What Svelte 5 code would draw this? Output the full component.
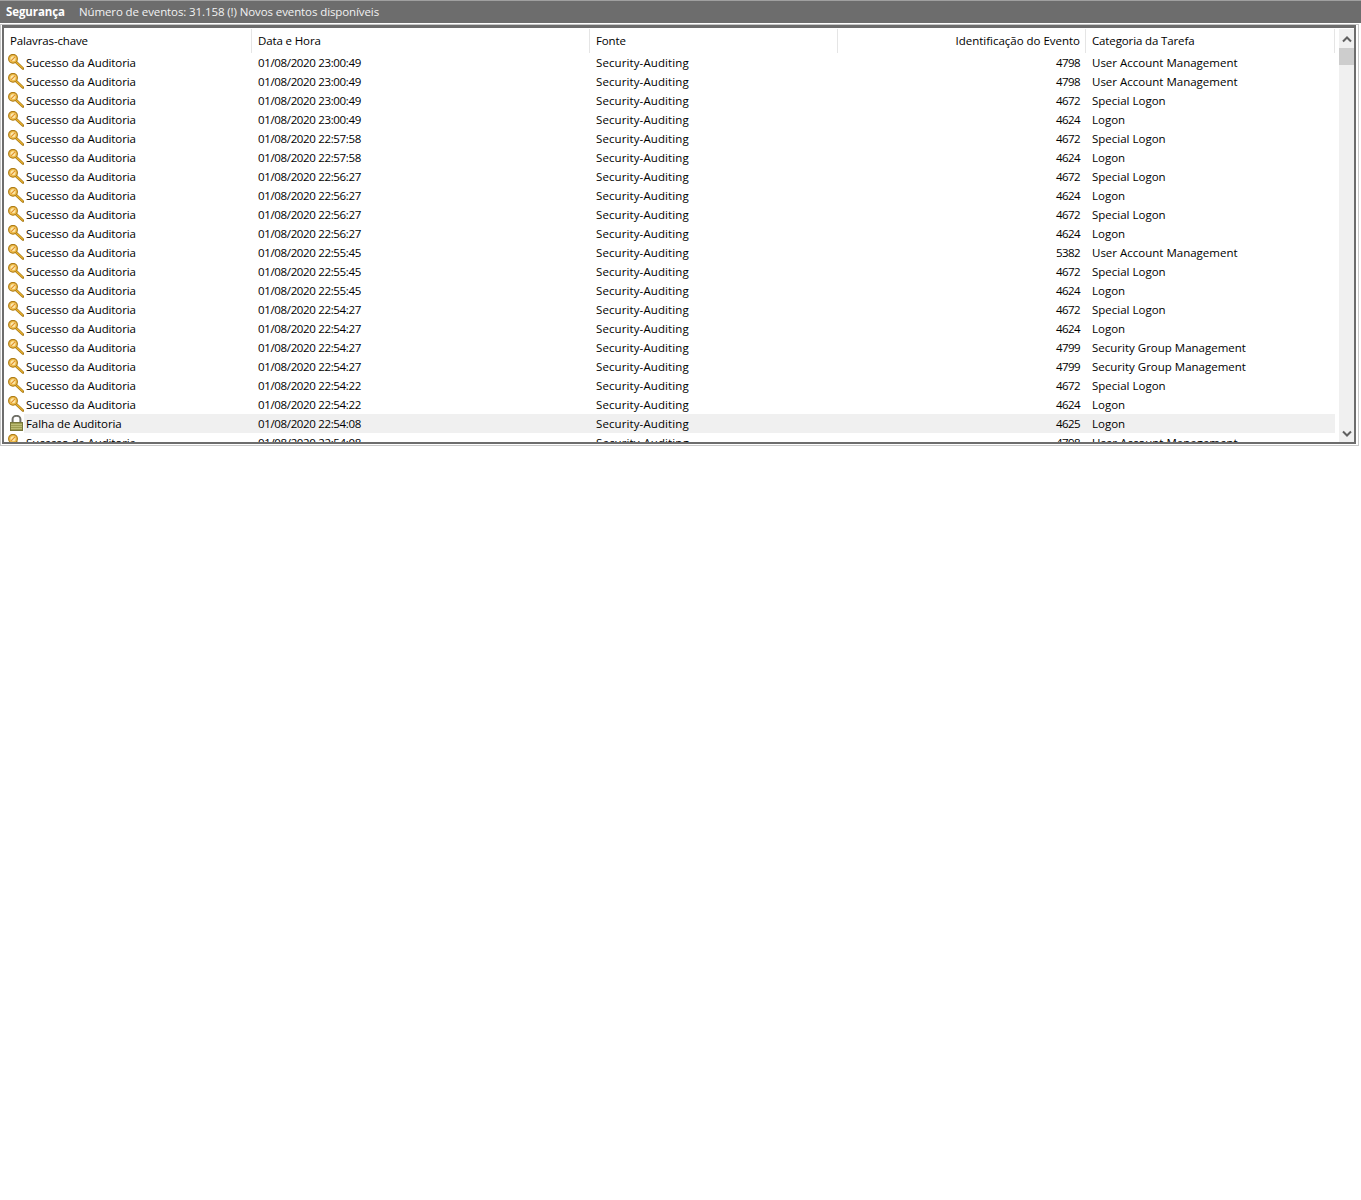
<script>
  const s = 'Sucesso da Auditoria', f = 'Falha de Auditoria';
  const uam = 'User Account Management', sl = 'Special Logon', l = 'Logon', sg = 'Security Group Management';
  const rows = [
    [s,'23:00:49',4798,uam],[s,'23:00:49',4798,uam],[s,'23:00:49',4672,sl],[s,'23:00:49',4624,l],
    [s,'22:57:58',4672,sl],[s,'22:57:58',4624,l],[s,'22:56:27',4672,sl],[s,'22:56:27',4624,l],
    [s,'22:56:27',4672,sl],[s,'22:56:27',4624,l],[s,'22:55:45',5382,uam],[s,'22:55:45',4672,sl],
    [s,'22:55:45',4624,l],[s,'22:54:27',4672,sl],[s,'22:54:27',4624,l],[s,'22:54:27',4799,sg],
    [s,'22:54:27',4799,sg],[s,'22:54:22',4672,sl],[s,'22:54:22',4624,l],[f,'22:54:08',4625,l],
    [s,'22:54:08',4798,uam]
  ];
</script>

<div class="page">
  <div class="title">
    <strong>Segurança</strong>
    <span>Número de eventos: 31.158 (!) Novos eventos disponíveis</span>
  </div>
  <div class="frame">
    <div class="list">
      <div class="main">
        <div class="row head">
          <div class="c">Palavras-chave</div>
          <div class="c">Data e Hora</div>
          <div class="c">Fonte</div>
          <div class="c num">Identificação do Evento</div>
          <div class="c last">Categoria da Tarefa</div>
        </div>
        {#each rows as r}
          <div class="row item" class:sel={r[0] === f}>
            <div class="c kw">
              {#if r[0] === s}
                <svg width="16" height="16" viewBox="0 0 16 16">
                  <path d="M8 8 15 14.6" stroke="#a87a18" stroke-width="2.6" stroke-linecap="round"/>
                  <path d="M8 8 14.6 14.2" stroke="#eeb52e" stroke-width="1.1" stroke-linecap="round"/>
                  <circle cx="5" cy="4.8" r="4.4" fill="#eeb948" stroke="#ad7c16" stroke-width="1.1"/>
                  <circle cx="5" cy="4.8" r="2.5" fill="#fbe8ac"/>
                  <path d="M3.5 6.3 6.5 3.3" stroke="#e0902a" stroke-width="1.2" stroke-linecap="round"/>
                </svg>
              {:else}
                <svg width="16" height="16" viewBox="0 0 16 16">
                  <path d="M4.6 7V4a3.9 3.2 0 0 1 7.8 0v3" fill="none" stroke="#707068" stroke-width="2"/>
                  <rect x="2.5" y="7.5" width="12" height="8" fill="#9c9c50" stroke="#77773c"/>
                  <path d="M3 9.5h11M3 11.5h11M3 13.5h11" stroke="#bcbc74"/>
                </svg>
              {/if}
              <span>{r[0]}</span>
            </div>
            <div class="c date">01/08/2020 {r[1]}</div>
            <div class="c src">Security-Auditing</div>
            <div class="c num digits">{r[2]}</div>
            <div class="c last">{r[3]}</div>
          </div>
        {/each}
      </div>
      <div class="bar">
        <svg class="arrow up" width="16" height="17" viewBox="0 0 16 17"><path d="M4 10.5 8 6.5l4 4" fill="none" stroke="#606060" stroke-width="2"/></svg>
        <div class="thumb"></div>
        <div class="track"></div>
        <svg class="arrow" width="16" height="17" viewBox="0 0 16 17"><path d="M4 6.5 8 10.5l4-4" fill="none" stroke="#606060" stroke-width="2"/></svg>
      </div>
    </div>
  </div>
</div>

<style>
  :global(body) { margin: 0; background: #fff; }
  .page { font: 11.5px/16px "Open Sans", "Noto Sans", sans-serif; color: #000; width: 1361px; }
  .title {
    height: 22px; background: #6d6d6d; border-top: 1px solid #a0a0a0;
    color: #fff; display: flex; align-items: center; gap: 14px; padding-left: 6px;
  }
  .title strong { letter-spacing: -0.1px; }
  .title span { color: #f2f2f2; letter-spacing: -0.1px; }
  .frame {
    margin: 1px 2px 0 0; border: 1px solid #c8c8c8;
    height: 422px; box-sizing: border-box;
  }
  .list {
    margin-left: 1px; margin-right: 2px; height: 419px; box-sizing: border-box; display: flex; background: #fff;
    border: 2px solid #6d6d6d; border-top-width: 3px; overflow: hidden;
  }
  .main { width: 1331px; flex: none; overflow: hidden; padding-top: 1px; }
  .row { display: grid; grid-template-columns: 248px 338px 248px 248px 1fr; }
  .head { height: 24px; letter-spacing: -0.13px; }
  .head .c { border-right: 1px solid #e5e5e5; line-height: 23px; box-sizing: border-box; }
  .head .c:first-child { padding-left: 6px; }
  .head .c.num { letter-spacing: -0.02px; }
  .item { height: 19px; line-height: 19px; }
  .item.sel { background: #f0f0f0; }
  .c { padding-left: 6px; white-space: nowrap; overflow: hidden; }
  .c.num { text-align: right; padding-right: 5px; }
  .c.digits { letter-spacing: -0.6px; padding-right: 6px; }
  .date { letter-spacing: -0.35px; }
  .src { letter-spacing: 0.1px; }
  .kw { display: flex; align-items: flex-start; padding-left: 4px; }
  .kw svg { flex: none; margin-top: 1px; }
  .kw span { flex: 1; padding-left: 2px; height: 19px; letter-spacing: -0.1px; }
  .sel .kw { background: #fff; }
  .sel .kw span { background: #f0f0f0; }
  .bar { width: 16px; margin: 1px 0 0 4px; background: #f0f0f0; display: flex; flex-direction: column; }
  .arrow { display: block; flex: none; }
  .arrow.up { padding: 2px 0 0; }
  .thumb { height: 17px; background: #cdcdcd; flex: none; }
  .track { flex: 1; }
</style>
